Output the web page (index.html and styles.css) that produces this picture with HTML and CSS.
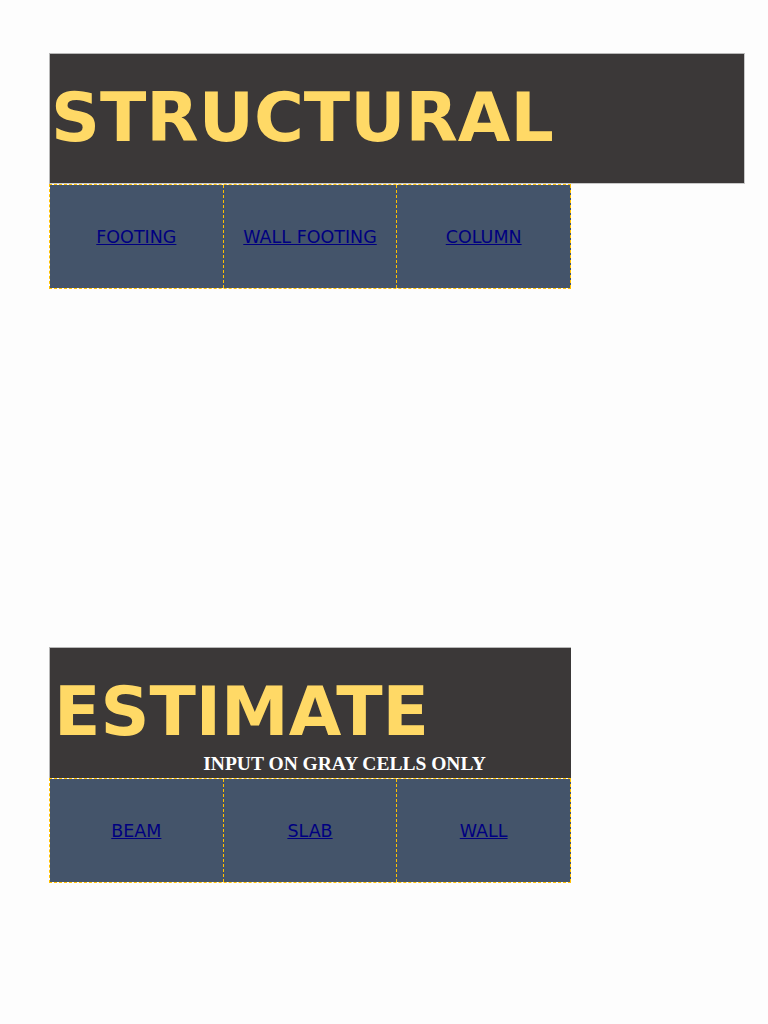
FILE: index.html
```html
<!DOCTYPE html>
<html>
<head>
	<meta charset="utf-8">
	<title>Structural Estimate</title>
	<link rel="stylesheet" href="styles.css">
</head>
<body>
	<div class="sheet">
		<div class="block">
			<div class="banner wide">
				<h1 class="title">STRUCTURAL</h1>
			</div>
			<div class="cells">
				<div class="cell"><a href="#footing">FOOTING</a></div>
				<div class="cell"><a href="#wall-footing">WALL FOOTING</a></div>
				<div class="cell"><a href="#column">COLUMN</a></div>
			</div>
		</div>

		<div class="block second">
			<div class="banner">
				<h1 class="title title2">ESTIMATE</h1>
				<p class="note">INPUT ON GRAY CELLS ONLY</p>
			</div>
			<div class="cells">
				<div class="cell"><a href="#beam">BEAM</a></div>
				<div class="cell"><a href="#slab">SLAB</a></div>
				<div class="cell"><a href="#wall">WALL</a></div>
			</div>
		</div>
	</div>
</body>
</html>
```

FILE: styles.css
```css
*{
	margin: 0;
	padding: 0;
	box-sizing: border-box;
}
body{
	background: #fdfdfd;
	font-family: "DejaVu Sans", sans-serif;
}
.sheet{
	padding: 53px 0 0 49px;
}
.block{
	width: 522px;
}
.second{
	margin-top: 358px;
}
.banner{
	width: 522px;
	height: 131px;
	background: #3b3838;
	border-top: 1px solid #b8b8b8;
	border-left: 1px solid #b8b8b8;
}
.banner.wide{
	width: 696px;
	border-right: 1px solid #c8c8c8;
	border-bottom: 1px solid #c8c8c8;
}
.title{
	color: #ffd966;
	font-size: 68px;
	font-weight: bold;
	line-height: 1;
	padding: 30px 0 0 1px;
}
.title2{
	padding-left: 4px;
}
.note{
	color: #ffffff;
	font-family: "Liberation Serif", serif;
	font-weight: bold;
	font-size: 19.5px;
	text-align: center;
	margin-left: 68px;
	padding-top: 7px;
}
.cells{
	display: flex;
	width: 522px;
	border-top: 1px dashed #ffc000;
	border-bottom: 1px dashed #ffc000;
	border-left: 1px dashed #ffc000;
}
.cell{
	flex: 1;
	height: 103px;
	background: #44546a;
	border-right: 1px dashed #ffc000;
	display: flex;
	align-items: center;
	justify-content: center;
}
.cell a{
	color: #000080;
	font-size: 17.5px;
}
```
